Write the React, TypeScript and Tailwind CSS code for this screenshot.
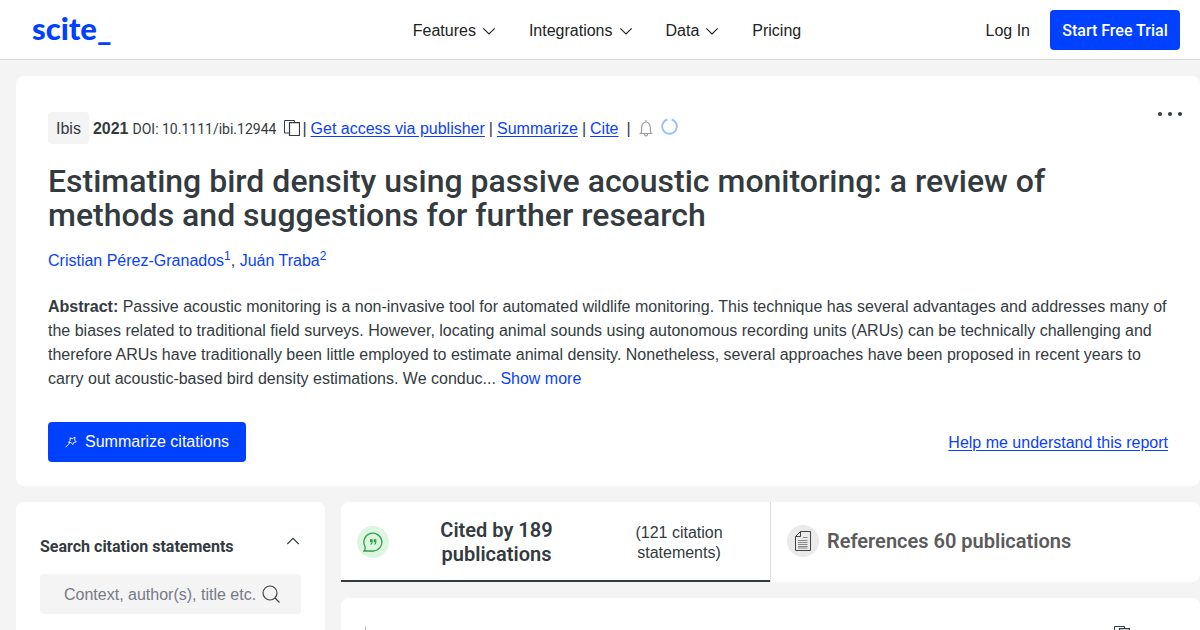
import type { ReactNode } from "react";

const LINK = "text-[#0a3fff] underline underline-offset-2";

function Chevron({ up = false }: { up?: boolean }) {
  return (
    <svg width="14" height="14" viewBox="0 0 14 14" fill="none" stroke="currentColor" strokeWidth="1.1" aria-hidden="true">
      <path d={up ? "M1.300 10L7 4.300l5.700 5.700" : "M1.3 4.3L7 10l5.700-5.700"} />
    </svg>
  );
}

function NavButton({ children }: { children: ReactNode }) {
  return (
    <button type="button" className="flex items-center gap-[6px]">
      {children}
      <Chevron />
    </button>
  );
}

function CopyIcon() {
  return (
    <svg width="16" height="16" viewBox="0 0 16 16" fill="none" stroke="#333b40" aria-hidden="true">
      <path d="M10.500 2.500V.5H.5v12.500h4.500" />
      <path d="M5.500 2.700h10v12.800h-10z" strokeWidth="1.200" />
    </svg>
  );
}

function BellIcon() {
  return (
    <svg width="14" height="17" viewBox="0 0 14 17" fill="none" stroke="#9a9ea1" strokeWidth="1.200" aria-hidden="true">
      <path d="M.5 13.500h13M2 13.500c.7-1.300.7-2.500.7-6a4.300 5.500 0 0 1 8.600 0c0 3.500 0 4.700.7 6M5.400 14a1.600 2 0 0 0 3.200 0M7 0v1.500" />
    </svg>
  );
}

function Spinner() {
  return (
    <svg width="17" height="17" viewBox="0 0 17 17" fill="none" stroke="#9cc0ff" strokeWidth="1.900" aria-hidden="true">
      <path d="M10.600 1.500A7.300 7.300 0 1 1 6.400 1.500" />
    </svg>
  );
}

function WandIcon() {
  return (
    <svg width="12" height="12" viewBox="0 0 12 12" fill="none" stroke="#fff" strokeWidth="0.900" aria-hidden="true">
      <path d="M.5 11.300l4.300-4.400M5 1.800l2.300.9 2.700-1.600-.3 3 1.600 1.800-2.400.4-1.100 2.300-1.600-2-2.700-.2 1.700-2z" />
    </svg>
  );
}

function QuoteBubble() {
  return (
    <svg width="20" height="20" viewBox="0 0 20 20" fill="none" stroke="#32a04a" strokeWidth="1.300" aria-hidden="true">
      <path d="M1 19c1.300-1.400 1.500-3 .9-4.700A9 8.900 0 1 1 10.200 19z" />
      <g fill="#32a04a" stroke="none">
        <path d="M7 7.300h2.700v2.600c0 1.500-.8 2.600-2.100 3v-1.100c.6-.3.9-.8.9-1.500H7z" />
        <path d="M10.700 7.300h2.700v2.600c0 1.500-.8 2.600-2.100 3v-1.100c.6-.3.9-.8.9-1.500h-1.500z" />
      </g>
    </svg>
  );
}

function DocumentIcon() {
  return (
    <svg width="16" height="20" viewBox="0 0 16 20" fill="none" stroke="#444" aria-hidden="true">
      <path d="M5.500.5h10v19H.5v-14zM5.500.5v5h-5" />
      <path d="M8 6.500h4.500M3 9.500h9.500M3 11.500h9.500M3 13.500h9.500M3 15.500h9.500M3 17h9.500" stroke="#888" />
    </svg>
  );
}

function Header() {
  return (
    <header className="grid h-[60px] shrink-0 grid-cols-[1fr_auto_1fr] items-center border-b border-[#d9d9d9] bg-white pr-5 pl-8 text-[#222]">
      <a href="#home" className="pb-1 font-['Lato',sans-serif] text-[31px] leading-8 font-black text-[#0040ff]">
        scite_
      </a>
      <nav className="flex items-center gap-[33px] pt-[2px] pl-[2px]">
        <NavButton>Features</NavButton>
        <NavButton>Integrations</NavButton>
        <NavButton>Data</NavButton>
        <a href="#pricing">Pricing</a>
      </nav>
      <div className="flex items-center justify-end gap-5">
        <a href="#login" className="pt-[2px]">Log In</a>
        <a
          href="#trial"
          className="flex h-10 w-[130px] items-center justify-center rounded bg-[#0040ff] pt-[2px] font-['Roboto',sans-serif] font-medium whitespace-nowrap text-white"
        >
          Start Free Trial
        </a>
      </div>
    </header>
  );
}

function Report() {
  return (
    <section className="shrink-0 rounded-lg bg-white px-8 pt-9 pb-6">
      <div className="flex h-8 items-center justify-between">
        <div className="flex items-center gap-1 whitespace-nowrap">
          <span className="flex h-8 items-center rounded bg-[#f4f4f4] px-2 pt-[2px]">Ibis</span>
          <b className="pt-[2px]">2021</b>
          <span className="pt-[2px] font-['Roboto',sans-serif] text-sm">DOI: 10.1111/ibi.12944</span>
          <button type="button" aria-label="Copy DOI" className="-mr-[2px] ml-1">
            <CopyIcon />
          </button>
          <span className="pt-[2px]">|</span>
          <a href="#publisher" className={`pt-[2px] ${LINK}`}>Get access via publisher</a>
          <span className="pt-[2px]">|</span>
          <a href="#summarize" className={`pt-[2px] ${LINK}`}>Summarize</a>
          <span className="pt-[2px]">|</span>
          <a href="#cite" className={`pt-[2px] ${LINK}`}>Cite</a>
          <span className="ml-1 pt-[2px]">|</span>
          <button type="button" aria-label="Notify me" className="ml-1">
            <BellIcon />
          </button>
          <span className="ml-1 pb-1">
            <Spinner />
          </span>
        </div>
        <button type="button" aria-label="More options" className="-mr-[14px] flex gap-[6px] pb-7">
          <span className="size-1 rounded-full bg-[#333b40]" />
          <span className="size-1 rounded-full bg-[#333b40]" />
          <span className="size-1 rounded-full bg-[#333b40]" />
        </button>
      </div>
      <h1 className="mt-5 max-w-[1040px] font-['Roboto',sans-serif] text-[32px] leading-[34px] font-medium">
        Estimating bird density using passive acoustic monitoring: a review of methods and suggestions for further
        research
      </h1>
      <p className="mt-[17px] leading-6">
        <a href="#author-1" className="text-[#0a3fff]">
          Cristian Pérez-Granados<sup className="text-xs">1</sup>
        </a>
        ,{" "}
        <a href="#author-2" className="text-[#0a3fff]">
          Juán Traba<sup className="text-xs">2</sup>
        </a>
      </p>
      <p className="mt-[22px] leading-6">
        <b>Abstract:</b> Passive acoustic monitoring is a non-invasive tool for automated wildlife monitoring. This
        technique has several advantages and addresses many of the biases related to traditional field surveys. However,
        locating animal sounds using autonomous recording units (ARUs) can be technically challenging and therefore ARUs
        have traditionally been little employed to estimate animal density. Nonetheless, several approaches have been
        proposed in recent years to carry out acoustic-based bird density estimations. We conduc...{" "}
        <a href="#abstract" className="text-[#0a3fff]">Show more</a>
      </p>
      <div className="mt-[31px] flex h-10 items-center justify-between">
        <button type="button" className="flex h-10 items-center gap-2 rounded bg-[#0040ff] px-[17px] text-white">
          <WandIcon />
          Summarize citations
        </button>
        <a href="#help" className={`pt-[2px] ${LINK}`}>Help me understand this report</a>
      </div>
    </section>
  );
}

function Sidebar() {
  return (
    <aside className="w-[309px] shrink-0 rounded-t-lg bg-white px-6 pt-8">
      <div className="flex h-6 items-start justify-between font-['Roboto',sans-serif]">
        <label htmlFor="search" className="pt-px leading-6 font-bold">Search citation statements</label>
        <button type="button" aria-label="Collapse search" className="pr-px">
          <Chevron up />
        </button>
      </div>
      <div className="mt-4 flex h-10 items-center rounded bg-[#f4f4f4] pr-[21px] pl-6">
        <input
          id="search"
          placeholder="Context, author(s), title etc."
          className="w-full min-w-0 flex-1 bg-transparent pt-[2px] outline-none placeholder:text-[#767a88]"
        />
        <svg width="18" height="18" viewBox="0 0 18 18" fill="none" stroke="#444" strokeWidth="1.200" aria-hidden="true">
          <circle cx="8" cy="8" r="7" />
          <path d="M13 13l4.500 4.500" />
        </svg>
      </div>
    </aside>
  );
}

function Results() {
  return (
    <div className="flex min-w-0 flex-1 flex-col gap-4">
      <div className="flex h-20 shrink-0 overflow-hidden rounded-t-lg rounded-br-lg bg-white" role="tablist">
        <button
          type="button"
          role="tab"
          aria-selected="true"
          className="flex flex-1 items-center border-b-2 border-[#333b40] px-4 pt-[2px]"
        >
          <span className="flex size-8 shrink-0 items-center justify-center rounded-full bg-[#def5e1]">
            <QuoteBubble />
          </span>
          <span className="flex-1 px-8 font-['Roboto',sans-serif] text-xl leading-6 font-semibold">
            Cited by 189 publications
          </span>
          <span className="w-[150px] px-5 pt-px leading-5">(121 citation statements)</span>
        </button>
        <button
          type="button"
          role="tab"
          aria-selected="false"
          className="flex flex-1 items-center gap-2 border-l border-[#dedede] px-4 pb-[2px]"
        >
          <span className="flex size-8 shrink-0 items-center justify-center rounded-full bg-[#eaeaea]">
            <DocumentIcon />
          </span>
          <span className="font-['Roboto',sans-serif] text-xl leading-6 font-semibold text-[#5b5b5b]">
            References 60 publications
          </span>
        </button>
      </div>
      <div className="flex flex-1 items-start justify-between rounded-t-lg bg-white pt-7 pr-[70px] pl-6">
        <div className="h-10 border-l border-[#c4c4c4]" />
        <button type="button" aria-label="Copy statement">
          <CopyIcon />
        </button>
      </div>
    </div>
  );
}

export default function App() {
  return (
    <div className="flex h-screen flex-col overflow-hidden bg-[#f4f4f4] font-['Liberation_Sans',Arial,sans-serif] text-base text-[#333b40]">
      <Header />
      <main className="flex min-h-0 flex-1 flex-col gap-4 pt-4 pl-4">
        <Report />
        <div className="flex min-h-0 flex-1 gap-4">
          <Sidebar />
          <Results />
        </div>
      </main>
    </div>
  );
}
